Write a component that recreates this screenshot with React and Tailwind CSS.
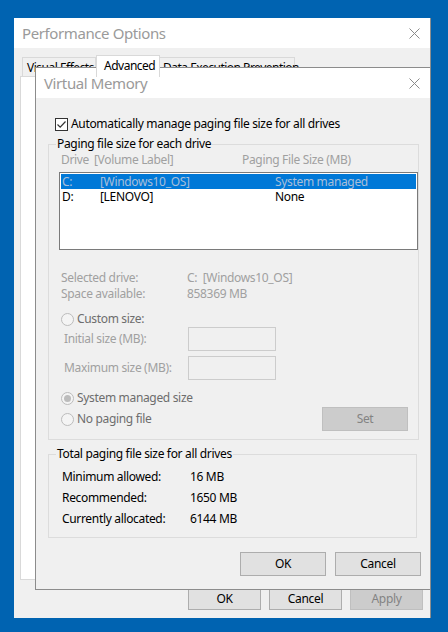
import React from "react";

function CloseX() {
  return (
    <svg width="11" height="11" viewBox="0 0 11 11" className="block">
      <path d="M0.5 0.5 L10.5 10.5 M10.5 0.5 L0.5 10.5" stroke="#8a8a8a" strokeWidth="1" fill="none" />
    </svg>
  );
}

function Radio({ checked, label }) {
  return (
    <div className="flex items-center h-[16px]">
      <span className="w-[13px] h-[13px] rounded-full border border-[#bcbcbc] bg-[#f4f4f4] flex items-center justify-center">
        {checked && <span className="w-[7px] h-[7px] rounded-full bg-[#bcbcbc]" />}
      </span>
      <span className="ml-[3px] text-[#6d6d6d] whitespace-nowrap">{label}</span>
    </div>
  );
}

function Btn({ children, className = "" }) {
  return (
    <div className={"flex items-center justify-center border " + className}>{children}</div>
  );
}

export default function App() {
  return (
    <div className="relative w-[448px] h-[632px] overflow-hidden bg-[#0063b1] font-['Noto_Sans',sans-serif] text-[12px] leading-[16px] tracking-[-0.33px] text-black whitespace-nowrap">
      {/* Outer window: Performance Options */}
      <div className="absolute left-[14px] top-[18px] w-[417px] h-[600px] bg-[#f0f0f0] border-r border-[#8e8e8e] flex flex-col">
        <div className="h-[30px] bg-white flex items-center justify-between pl-[8px] pr-[10px]">
          <span className="text-[15px] tracking-[-0.4px] text-[#9a9a9a]">Performance Options</span>
          <CloseX />
        </div>
        <div className="mt-[7px] h-[21px] flex items-end pl-[8px] tracking-[-0.5px]">
          <div className="w-[74px] h-[19px] border border-b-0 border-[#d9d9d9] bg-[#f0f0f0] pl-[4px] pt-[2px]">Visual Effects</div>
          <div className="relative z-10 -mb-px w-[64px] h-[22px] border border-b-0 border-[#d9d9d9] bg-white pl-[7px] pt-[2px]">Advanced</div>
          <div className="w-[135px] h-[19px] border border-b-0 border-l-0 border-[#d9d9d9] bg-[#f0f0f0] pl-[3px] pt-[2px]">Data Execution Prevention</div>
        </div>
        <div className="mx-[6px] h-[504px] bg-white border border-[#d9d9d9]" />
        <div className="mt-[8px] h-[22px] flex justify-end gap-[8px] pr-[7px]">
          <Btn className="w-[73px] bg-[#e1e1e1] border-[#adadad]">OK</Btn>
          <Btn className="w-[73px] bg-[#e1e1e1] border-[#adadad]">Cancel</Btn>
          <Btn className="w-[73px] bg-[#cccccc] border-[#bfbfbf] text-[#838383]">Apply</Btn>
        </div>
      </div>

      {/* Modal window: Virtual Memory */}
      <div className="absolute left-[35px] top-[67px] w-[396px] h-[523px] border border-[#8c8c8c] bg-[#f0f0f0] flex flex-col">
        <div className="h-[30px] bg-white flex items-center justify-between pl-[8px] pr-[10px]">
          <span className="text-[15px] tracking-[-0.4px] text-[#9a9a9a]">Virtual Memory</span>
          <CloseX />
        </div>

        <div className="flex flex-col">
          {/* checkbox */}
          <div className="mt-[18px] ml-[19px] h-[16px] flex items-center">
            <span className="w-[13px] h-[13px] border border-[#333333] bg-white flex items-center justify-center">
              <svg width="11" height="11" viewBox="0 0 11 11" className="block">
                <path d="M1.5 5.5 L4.2 8.2 L9.5 2.5" stroke="#333333" strokeWidth="1.2" fill="none" />
              </svg>
            </span>
            <span className="ml-[3px]">Automatically manage paging file size for all drives</span>
          </div>

          {/* group 1 */}
          <fieldset className="mt-[4px] ml-[12px] w-[369px] border border-[#dcdcdc] flex flex-col">
            <legend className="ml-[7px] px-[1px] leading-[16px]">Paging file size for each drive</legend>
            <div className="pl-[12px] h-[16px] flex text-[#a0a0a0]">
              <span className="w-[33px]">Drive</span>
              <span className="w-[148px]">[Volume Label]</span>
              <span>Paging File Size (MB)</span>
            </div>
            <div className="mt-[4px] ml-[10px] w-[359px] h-[78px] border border-[#7a7a7a] bg-white p-[1px] flex flex-col leading-[14px]">
              <div className="h-[15px] bg-[#0078d7] flex items-center pl-[1px] text-[#a9bfd9]">
                <span className="w-[38px]">C:</span>
                <span className="w-[175px]">[Windows10_OS]</span>
                <span>System managed</span>
              </div>
              <div className="h-[15px] flex items-center pl-[1px] text-black">
                <span className="w-[38px]">D:</span>
                <span className="w-[175px]">[LENOVO]</span>
                <span>None</span>
              </div>
            </div>
            <div className="mt-[19px] pl-[12px] flex flex-col text-[#a0a0a0]">
              <div className="h-[17px] flex items-center">
                <span className="w-[126px]">Selected drive:</span>
                <span>C:&nbsp; [Windows10_OS]</span>
              </div>
              <div className="h-[16px] flex items-center">
                <span className="w-[126px]">Space available:</span>
                <span>858369 MB</span>
              </div>
            </div>
            <div className="mt-[9px] pl-[12px]">
              <Radio label="Custom size:" />
            </div>
            <div className="pl-[15px] h-[24px] flex items-center text-[#a0a0a0]">
              <span className="w-[124px]">Initial size (MB):</span>
              <span className="w-[88px] h-[24px] border border-[#cccccc] bg-[#f0f0f0]" />
            </div>
            <div className="mt-[5px] pl-[15px] h-[24px] flex items-center text-[#a0a0a0]">
              <span className="w-[124px]">Maximum size (MB):</span>
              <span className="w-[88px] h-[24px] border border-[#cccccc] bg-[#f0f0f0]" />
            </div>
            <div className="mt-[10px] pl-[12px]">
              <Radio checked label="System managed size" />
            </div>
            <div className="mt-[1px] pl-[12px] pr-[10px] h-[24px] flex items-center justify-between">
              <Radio label="No paging file" />
              <Btn className="w-[86px] h-[24px] bg-[#cccccc] border-[#bfbfbf] text-[#838383]">Set</Btn>
            </div>
            <div className="h-[8px]" />
          </fieldset>

          {/* group 2 */}
          <fieldset className="mt-[6px] ml-[12px] w-[369px] border border-[#dcdcdc] flex flex-col">
            <legend className="ml-[7px] px-[1px] leading-[16px]">Total paging file size for all drives</legend>
            <div className="mt-[4px] pl-[13px] flex flex-col">
              <div className="h-[21px] flex items-center">
                <span className="w-[128px]">Minimum allowed:</span>
                <span>16 MB</span>
              </div>
              <div className="h-[21px] flex items-center">
                <span className="w-[128px]">Recommended:</span>
                <span>1650 MB</span>
              </div>
              <div className="h-[21px] flex items-center">
                <span className="w-[128px]">Currently allocated:</span>
                <span>6144 MB</span>
              </div>
            </div>
            <div className="h-[8px]" />
          </fieldset>

          <div className="mt-[14px] pr-[9px] flex justify-end gap-[9px]">
            <Btn className="w-[86px] h-[24px] bg-[#e1e1e1] border-[#adadad]">OK</Btn>
            <Btn className="w-[86px] h-[24px] bg-[#e1e1e1] border-[#adadad]">Cancel</Btn>
          </div>
        </div>
      </div>
    </div>
  );
}
